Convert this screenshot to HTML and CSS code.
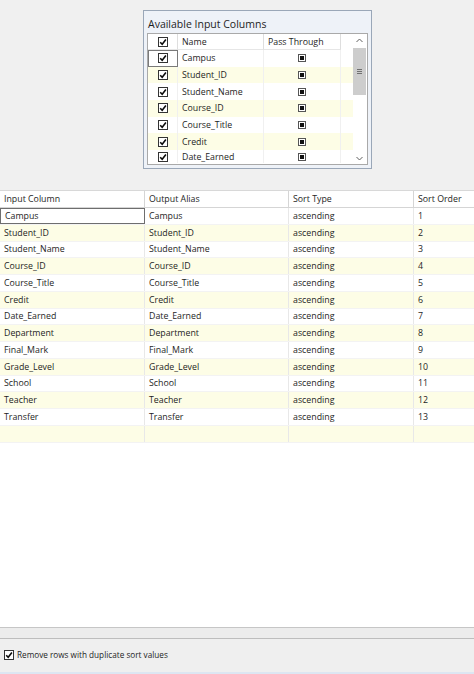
FILE: index.html
```html
<!DOCTYPE html>
<html>
<head>
<meta charset="utf-8">
<link rel="stylesheet" href="styles.css">
</head>
<body>
<div class="page">
  <div class="top">
    <div class="panel">
      <div class="panel-title">Available Input Columns</div>
      <div class="list">
        <div class="list-cols">
          <div class="lrow lhead">
            <div class="lc lc-chk"><span class="cb"><svg viewBox="0 0 8 8"><path d="M1.2 4.2 L3.2 6.2 L6.9 1.6"/></svg></span></div>
            <div class="lc lc-name">Name</div>
            <div class="lc lc-pass">Pass Through</div>
            <div class="lc lc-gap"></div>
          </div>
          <div class="lrow">
            <div class="lc lc-chk focus"><span class="cb"><svg viewBox="0 0 8 8"><path d="M1.2 4.2 L3.2 6.2 L6.9 1.6"/></svg></span></div>
            <div class="lc lc-name">Campus</div>
            <div class="lc lc-pass"><span class="pt"></span></div>
            <div class="lc lc-gap"></div>
          </div>
          <div class="lrow alt">
            <div class="lc lc-chk"><span class="cb"><svg viewBox="0 0 8 8"><path d="M1.2 4.2 L3.2 6.2 L6.9 1.6"/></svg></span></div>
            <div class="lc lc-name">Student_ID</div>
            <div class="lc lc-pass"><span class="pt"></span></div>
            <div class="lc lc-gap"></div>
          </div>
          <div class="lrow">
            <div class="lc lc-chk"><span class="cb"><svg viewBox="0 0 8 8"><path d="M1.2 4.2 L3.2 6.2 L6.9 1.6"/></svg></span></div>
            <div class="lc lc-name">Student_Name</div>
            <div class="lc lc-pass"><span class="pt"></span></div>
            <div class="lc lc-gap"></div>
          </div>
          <div class="lrow alt">
            <div class="lc lc-chk"><span class="cb"><svg viewBox="0 0 8 8"><path d="M1.2 4.2 L3.2 6.2 L6.9 1.6"/></svg></span></div>
            <div class="lc lc-name">Course_ID</div>
            <div class="lc lc-pass"><span class="pt"></span></div>
            <div class="lc lc-gap"></div>
          </div>
          <div class="lrow">
            <div class="lc lc-chk"><span class="cb"><svg viewBox="0 0 8 8"><path d="M1.2 4.2 L3.2 6.2 L6.9 1.6"/></svg></span></div>
            <div class="lc lc-name">Course_Title</div>
            <div class="lc lc-pass"><span class="pt"></span></div>
            <div class="lc lc-gap"></div>
          </div>
          <div class="lrow alt">
            <div class="lc lc-chk"><span class="cb"><svg viewBox="0 0 8 8"><path d="M1.2 4.2 L3.2 6.2 L6.9 1.6"/></svg></span></div>
            <div class="lc lc-name">Credit</div>
            <div class="lc lc-pass"><span class="pt"></span></div>
            <div class="lc lc-gap"></div>
          </div>
          <div class="lrow last">
            <div class="lc lc-chk"><span class="cb"><svg viewBox="0 0 8 8"><path d="M1.2 4.2 L3.2 6.2 L6.9 1.6"/></svg></span></div>
            <div class="lc lc-name">Date_Earned</div>
            <div class="lc lc-pass"><span class="pt"></span></div>
            <div class="lc lc-gap"></div>
          </div>
        </div>
        <div class="scroll">
          <div class="sarrow">
            <svg width="7" height="5" viewBox="0 0 7 5"><path d="M0.5 4 L3.5 1 L6.5 4" fill="none" stroke="#606060" stroke-width="1"/></svg>
          </div>
          <div class="strack">
            <div class="sthumb">
              <svg width="5" height="5" viewBox="0 0 5 5"><path d="M0 0.5 H5 M0 2.5 H5 M0 4.5 H5" stroke="#707070" stroke-width="1"/></svg>
            </div>
          </div>
          <div class="sarrow">
            <svg width="7" height="5" viewBox="0 0 7 5"><path d="M0.5 1 L3.5 4 L6.5 1" fill="none" stroke="#606060" stroke-width="1"/></svg>
          </div>
        </div>
      </div>
    </div>
  </div>

  <div class="grid">
    <div class="grow ghead">
      <div class="gc c1">Input Column</div>
      <div class="gc c2">Output Alias</div>
      <div class="gc c3">Sort Type</div>
      <div class="gc c4">Sort Order</div>
    </div>
    <div class="grow">
      <div class="gc c1 focus">Campus</div>
      <div class="gc c2">Campus</div>
      <div class="gc c3">ascending</div>
      <div class="gc c4">1</div>
    </div>
    <div class="grow alt">
      <div class="gc c1">Student_ID</div>
      <div class="gc c2">Student_ID</div>
      <div class="gc c3">ascending</div>
      <div class="gc c4">2</div>
    </div>
    <div class="grow">
      <div class="gc c1">Student_Name</div>
      <div class="gc c2">Student_Name</div>
      <div class="gc c3">ascending</div>
      <div class="gc c4">3</div>
    </div>
    <div class="grow alt">
      <div class="gc c1">Course_ID</div>
      <div class="gc c2">Course_ID</div>
      <div class="gc c3">ascending</div>
      <div class="gc c4">4</div>
    </div>
    <div class="grow">
      <div class="gc c1">Course_Title</div>
      <div class="gc c2">Course_Title</div>
      <div class="gc c3">ascending</div>
      <div class="gc c4">5</div>
    </div>
    <div class="grow alt">
      <div class="gc c1">Credit</div>
      <div class="gc c2">Credit</div>
      <div class="gc c3">ascending</div>
      <div class="gc c4">6</div>
    </div>
    <div class="grow">
      <div class="gc c1">Date_Earned</div>
      <div class="gc c2">Date_Earned</div>
      <div class="gc c3">ascending</div>
      <div class="gc c4">7</div>
    </div>
    <div class="grow alt">
      <div class="gc c1">Department</div>
      <div class="gc c2">Department</div>
      <div class="gc c3">ascending</div>
      <div class="gc c4">8</div>
    </div>
    <div class="grow">
      <div class="gc c1">Final_Mark</div>
      <div class="gc c2">Final_Mark</div>
      <div class="gc c3">ascending</div>
      <div class="gc c4">9</div>
    </div>
    <div class="grow alt">
      <div class="gc c1">Grade_Level</div>
      <div class="gc c2">Grade_Level</div>
      <div class="gc c3">ascending</div>
      <div class="gc c4">10</div>
    </div>
    <div class="grow">
      <div class="gc c1">School</div>
      <div class="gc c2">School</div>
      <div class="gc c3">ascending</div>
      <div class="gc c4">11</div>
    </div>
    <div class="grow alt">
      <div class="gc c1">Teacher</div>
      <div class="gc c2">Teacher</div>
      <div class="gc c3">ascending</div>
      <div class="gc c4">12</div>
    </div>
    <div class="grow">
      <div class="gc c1">Transfer</div>
      <div class="gc c2">Transfer</div>
      <div class="gc c3">ascending</div>
      <div class="gc c4">13</div>
    </div>
    <div class="grow alt empty">
      <div class="gc c1"></div>
      <div class="gc c2"></div>
      <div class="gc c3"></div>
      <div class="gc c4"></div>
    </div>
  </div>

  <div class="band"></div>

  <div class="footer">
    <label class="opt"><span class="cb"><svg viewBox="0 0 8 8"><path d="M1.2 4.2 L3.2 6.2 L6.9 1.6"/></svg></span><span class="opt-text">Remove rows with duplicate sort values</span></label>
  </div>
</div>
</body>
</html>
```

FILE: styles.css
```css
* { box-sizing: border-box; }
html, body { margin: 0; padding: 0; }
body {
  width: 474px;
  height: 674px;
  overflow: hidden;
  background: #f0f0f0;
  font-family: "Open Sans", "Noto Sans", sans-serif;
  font-size: 8.8px;
  color: #1e1e1e;
}
.page {
  width: 474px;
  height: 674px;
  display: flex;
  flex-direction: column;
}

/* ---------- top area ---------- */
.top {
  height: 191px;
  flex: none;
  padding-top: 10px;
  padding-left: 143px;
  border-bottom: 1px solid #d8d8d8;
  background: #f0f0f0;
}
.panel {
  width: 229px;
  height: 159px;
  border: 1px solid #9aa7b8;
  background: #eef2f8;
  padding: 0 3px 3px 3px;
  display: flex;
  flex-direction: column;
}
.panel-title {
  height: 22px;
  font-size: 10.5px;
  line-height: 20px;
  padding-top: 3px;
  padding-left: 1px;
  color: #1e1e1e;
}
.list {
  flex: 1;
  border: 1px solid #a9a9a9;
  background: #ffffff;
  display: flex;
}
.list-cols {
  flex: 1;
  display: flex;
  flex-direction: column;
}
.lrow {
  height: 16.7px;
  display: flex;
  background: #ffffff;
}
.lrow.alt { background: #fdfde6; }
.lrow.last { height: 13px; overflow: hidden; }
.lhead { height: 16px; }
.lc {
  display: flex;
  align-items: center;
  border-right: 1px solid #f0f0f0;
}
.lhead .lc { border-right: 1px solid #dedede; border-bottom: 1px solid #e6e6e6; }
.lc-chk { width: 30px; justify-content: center; }
.lc-name { width: 86px; padding-left: 4px; }
.lc-pass { width: 77px; justify-content: center; }
.lhead .lc-pass { justify-content: flex-start; padding-left: 4px; }
.lc-gap { flex: 1; border-right: none; }
.lhead .lc-gap { border-right: none; border-bottom: none; }
.lc.focus { border: 1px solid #7a7a7a; }

.cb {
  display: inline-flex;
  width: 10px;
  height: 10px;
  border: 1px solid #333333;
  background: #ffffff;
  flex: none;
}
.cb svg {
  width: 8px;
  height: 8px;
  display: block;
}
.cb svg path {
  fill: none;
  stroke: #0a0a0a;
  stroke-width: 1.6;
}
.pt {
  display: inline-block;
  width: 8px;
  height: 8px;
  border: 1px solid #555555;
  background: #ffffff;
  position: relative;
}
.pt::after {
  content: "";
  position: absolute;
  left: 1px;
  top: 1px;
  width: 4px;
  height: 4px;
  background: #111111;
}

.scroll {
  width: 13px;
  margin-right: 1px;
  display: flex;
  flex-direction: column;
  background: #ffffff;
}
.sarrow {
  height: 12px;
  display: flex;
  align-items: center;
  justify-content: center;
}
.strack {
  flex: 1;
  padding: 2px 0;
}
.sthumb {
  height: 47px;
  background: #cdcdcd;
  display: flex;
  align-items: center;
  justify-content: center;
}

/* ---------- grid ---------- */
.grid {
  flex: none;
  height: 436px;
  background: #ffffff;
  display: flex;
  flex-direction: column;
}
.grow {
  display: flex;
  height: 16.75px;
  background: #ffffff;
  border-bottom: 1px solid #f3f3f3;
}
.grow.alt { background: #fdfde6; }
.ghead {
  height: 17px;
  border-bottom: 1px solid #d5d5d5;
  background: #ffffff;
}
.gc {
  display: flex;
  align-items: center;
  padding-left: 4px;
  border-right: 1px solid #e8e8e8;
  white-space: nowrap;
  overflow: hidden;
}
.ghead .gc { border-right: 1px solid #d5d5d5; }
.c1 { width: 145px; }
.c2 { width: 144px; }
.c3 { width: 125px; }
.c4 { flex: 1; border-right: none; }
.ghead .c4 { border-right: none; }
.gc.focus { border: 1px solid #6e6e6e; }

/* ---------- bottom ---------- */
.band {
  flex: none;
  height: 12px;
  border-top: 1px solid #c6c6c6;
  border-bottom: 1px solid #bdbdbd;
  background: #ececec;
}
.footer {
  flex: 1;
  display: flex;
  align-items: center;
  padding-left: 4px;
  padding-bottom: 2px;
  background: #efefef;
  border-bottom: 2px solid #dde6f2;
}
.opt {
  display: flex;
  align-items: center;
  gap: 3px;
}
.opt-text { font-size: 8.2px; }
```
